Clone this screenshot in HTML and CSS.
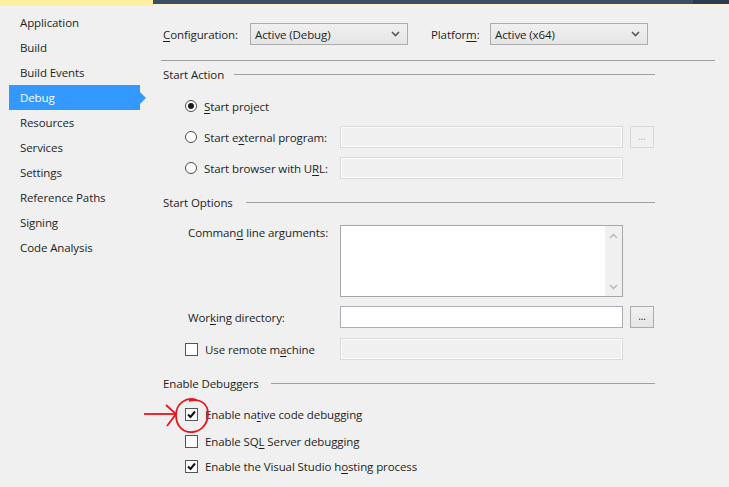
FILE: index.html
```html
<!DOCTYPE html>
<html>
<head>
<meta charset="utf-8">
<link rel="stylesheet" href="styles.css">
</head>
<body>
<div class="topbar">
  <div class="seg seg-yellow"></div>
  <div class="seg seg-dark"></div>
  <div class="seg seg-darker"></div>
</div>
<div class="page">
  <nav class="sidebar">
    <div class="nav-item">Application</div>
    <div class="nav-item">Build</div>
    <div class="nav-item">Build Events</div>
    <div class="nav-item active">Debug</div>
    <div class="nav-item">Resources</div>
    <div class="nav-item">Services</div>
    <div class="nav-item">Settings</div>
    <div class="nav-item">Reference Paths</div>
    <div class="nav-item">Signing</div>
    <div class="nav-item">Code Analysis</div>
  </nav>
  <main class="main">
    <div class="config-row">
      <span class="lbl-config"><u>C</u>onfiguration:</span>
      <div class="select sel-config"><span>Active (Debug)</span><svg class="chev" width="9" height="6" viewBox="0 0 9 6"><path d="M1 1 L4.5 4.5 L8 1" fill="none" stroke="#555" stroke-width="1.6"/></svg></div>
      <span class="lbl-platform">Platfor<u>m</u>:</span>
      <div class="select sel-platform"><span>Active (x64)</span><svg class="chev" width="9" height="6" viewBox="0 0 9 6"><path d="M1 1 L4.5 4.5 L8 1" fill="none" stroke="#555" stroke-width="1.6"/></svg></div>
    </div>
    <div class="hr"></div>

    <div class="group-head h-action"><span>Start Action</span><div class="line"></div></div>
    <div class="opt-rows">
      <div class="row">
        <div class="radio checked"></div><span class="rlabel"><u>S</u>tart project</span>
      </div>
      <div class="row">
        <div class="radio"></div><span class="rlabel">Start e<u>x</u>ternal program:</span>
        <div class="tb disabled"></div>
        <div class="btn disabled">...</div>
      </div>
      <div class="row">
        <div class="radio"></div><span class="rlabel">Start browser with U<u>R</u>L:</span>
        <div class="tb disabled"></div>
      </div>
    </div>

    <div class="group-head h-options"><span>Start Options</span><div class="line"></div></div>
    <div class="cmd-row">
      <span class="flabel">Comman<u>d</u> line arguments:</span>
      <div class="textarea">
        <div class="vscroll">
          <svg width="9" height="6" viewBox="0 0 9 6"><path d="M1 5 L4.5 1.5 L8 5" fill="none" stroke="#b5b5b5" stroke-width="1.4"/></svg>
          <svg width="9" height="6" viewBox="0 0 9 6"><path d="M1 1 L4.5 4.5 L8 1" fill="none" stroke="#b5b5b5" stroke-width="1.4"/></svg>
        </div>
      </div>
    </div>
    <div class="row wd-row">
      <span class="flabel">Wor<u>k</u>ing directory:</span>
      <div class="tb"></div>
      <div class="btn">...</div>
    </div>
    <div class="row remote-row">
      <div class="check"></div><span class="rlabel">Use remote m<u>a</u>chine</span>
      <div class="tb disabled"></div>
    </div>

    <div class="group-head h-debug"><span>Enable Debuggers</span><div class="line"></div></div>
    <div class="checks">
      <div class="crow c1"><div class="check on"><svg width="11" height="11" viewBox="0 0 11 11"><path d="M2 5.5 L4.5 8 L9 2.5" fill="none" stroke="#111" stroke-width="2"/></svg></div><span class="rlabel">Enable na<u>t</u>ive code debugging</span></div>
      <div class="crow c2"><div class="check"></div><span class="rlabel">Enable SQ<u>L</u> Server debugging</span></div>
      <div class="crow c3"><div class="check on"><svg width="11" height="11" viewBox="0 0 11 11"><path d="M2 5.5 L4.5 8 L9 2.5" fill="none" stroke="#111" stroke-width="2"/></svg></div><span class="rlabel">Enable the Visual Studio h<u>o</u>sting process</span></div>
    </div>
  </main>
</div>
<svg class="annot" width="729" height="487" viewBox="0 0 729 487">
  <path d="M197 400 C186 396 176 404 176 415 C176 427 184 433 193 432 C202 431 208 423 208 414 C208 404 201 398 189 401" fill="none" stroke="#e8141b" stroke-width="1.8"/>
  <path d="M144 414 L176 414" fill="none" stroke="#e8141b" stroke-width="1.8"/>
  <path d="M166 405 L176 414 L167 426" fill="none" stroke="#e8141b" stroke-width="1.8"/>
</svg>
</body>
</html>
```
FILE: styles.css
```css
* { box-sizing: border-box; }
html, body { margin: 0; padding: 0; }
body {
  width: 729px;
  height: 487px;
  overflow: hidden;
  background: #f0f0f0;
  font-family: "Open Sans", "Noto Sans", sans-serif;
  font-size: 11.5px;
  letter-spacing: -0.1px;
  color: #1e1e1e;
  position: relative;
}
u { text-decoration: underline; text-underline-offset: 2px; }

.topbar { display: flex; height: 6px; }
.seg { height: 100%; }
.seg-yellow { width: 153px; background: #fdeea0; }
.seg-dark { width: 540px; background: linear-gradient(#3d4d66 0 4px, #fbf3cc 4px 6px); }
.seg-darker { flex: 1; background: linear-gradient(#2e3a4e 0 4px, #fbf3cc 4px 6px); }

.page { display: flex; }
.sidebar { width: 153px; padding-top: 4px; }
.nav-item {
  height: 25px;
  line-height: 26px;
  margin-left: 9px;
  width: 131px;
  padding-left: 11px;
  position: relative;
}
.nav-item.active { background: #3399ff; color: #fff; }
.nav-item.active::after {
  content: "";
  position: absolute;
  right: -6px;
  top: 6.5px;
  border-left: 6px solid #3399ff;
  border-top: 6px solid transparent;
  border-bottom: 6px solid transparent;
}

.main { flex: 1; padding-left: 10px; }
.config-row { display: flex; align-items: center; margin-top: 17px; height: 22px; }
.lbl-config { width: 87px; }
.select {
  height: 22px;
  width: 158px;
  border: 1px solid #acacac;
  background: linear-gradient(#f0f0f0, #e5e5e5);
  display: flex;
  align-items: center;
  justify-content: space-between;
  padding: 0 7px 0 4px;
}
.lbl-platform { margin-left: 23px; width: 59px; }
.hr { height: 1px; background: #a0a0a0; margin: 15px 14px 0 -2px; }

.group-head { display: flex; align-items: center; height: 16px; }
.group-head .line { flex: 1; height: 1px; background: #a0a0a0; margin-left: 10px; margin-right: 74px; }
.h-action { margin-top: 5px; }
.h-options { margin-top: 15px; }
.h-options .line { margin-left: 13px; }
.h-debug { margin-top: 15px; }
.h-debug .line { margin-left: 12px; }

.opt-rows { display: flex; flex-direction: column; gap: 9px; margin-top: 13px; }
.row { display: flex; align-items: center; height: 22px; }
.radio {
  width: 12px; height: 12px;
  border-radius: 50%;
  border: 1px solid #4a4a4a;
  background: #fff;
  margin-left: 22px;
  display: flex; align-items: center; justify-content: center;
}
.radio.checked::after { content: ""; width: 6px; height: 6px; border-radius: 50%; background: #1a1a1a; }
.rlabel { margin-left: 7px; }
.row .rlabel { width: 136px; }
.tb {
  width: 283px;
  height: 22px;
  border: 1px solid #abadb3;
  background: #fff;
}
.tb.disabled { border-color: #d9d9d9; background: #f0f0f0; box-shadow: inset 0 0 0 1px #fcfcfc; }
.btn {
  width: 24px; height: 22px;
  margin-left: 7px;
  border: 1px solid #acacac;
  background: linear-gradient(#f0f0f0, #e5e5e5);
  display: flex; align-items: center; justify-content: center;
  font-size: 10px;
  line-height: 1;
  padding-bottom: 3px;
}
.btn.disabled { border-color: #d9d9d9; background: #f0f0f0; color: #b0b0b0; }

.cmd-row { display: flex; margin-top: 15px; }
.flabel { margin-left: 25px; width: 152px; }
.cmd-row .flabel { margin-top: 0; }
.textarea {
  width: 283px;
  height: 72px;
  border: 1px solid #a7a7a7;
  background: #fff;
  display: flex;
  justify-content: flex-end;
}
.vscroll {
  width: 17px;
  background: #f0f0f0;
  display: flex;
  flex-direction: column;
  justify-content: space-between;
  align-items: center;
  padding: 7px 0 6px;
}
.wd-row { margin-top: 9px; }
.remote-row { margin-top: 10px; }
.check {
  width: 13px; height: 13px;
  border: 1px solid #555;
  background: #fff;
  margin-left: 22px;
  display: flex; align-items: center; justify-content: center;
}
.remote-row .rlabel { width: 135px; }

.checks { margin-top: 14px; }
.crow { display: flex; align-items: center; height: 18px; }
.c2 { margin-top: 9px; }
.c3 { margin-top: 7px; }

.annot { position: absolute; left: 0; top: 0; pointer-events: none; }
```
